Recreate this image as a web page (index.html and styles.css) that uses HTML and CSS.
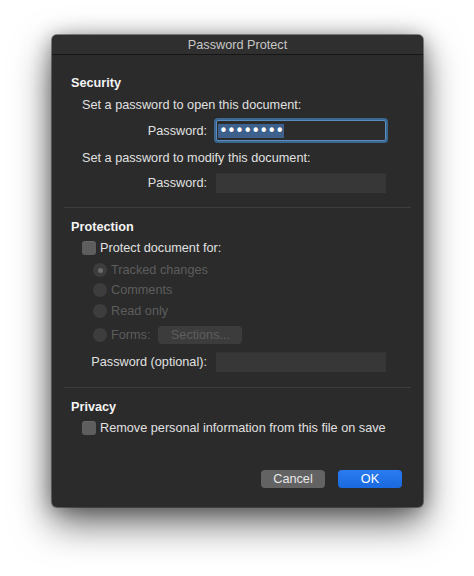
FILE: index.html
```html
<!DOCTYPE html>
<html lang="en">
<head>
<meta charset="utf-8">
<title>Password Protect</title>
<link rel="stylesheet" href="styles.css">
</head>
<body>
<div class="dialog">
  <div class="titlebar">Password Protect</div>

  <section class="section">
    <h2 class="heading h-security">Security</h2>
    <p class="line l-open">Set a password to open this document:</p>
    <div class="field-row r-pw1">
      <span class="label">Password:</span>
      <div class="field focused"><span class="sel">••••••••</span></div>
    </div>
    <p class="line l-modify">Set a password to modify this document:</p>
    <div class="field-row r-pw2">
      <span class="label">Password:</span>
      <div class="field"></div>
    </div>
  </section>

  <hr class="sep sep-1">

  <section class="section">
    <h2 class="heading h-protection">Protection</h2>
    <label class="check-row r-protect"><span class="checkbox"></span><span>Protect document for:</span></label>
    <div class="radio-row r-tracked disabled"><span class="radio on"></span><span>Tracked changes</span></div>
    <div class="radio-row r-comments disabled"><span class="radio"></span><span>Comments</span></div>
    <div class="radio-row r-readonly disabled"><span class="radio"></span><span>Read only</span></div>
    <div class="radio-row r-forms disabled"><span class="radio"></span><span class="forms-label">Forms:</span><span class="btn-sections">Sections...</span></div>
    <div class="field-row r-pwopt">
      <span class="label">Password (optional):</span>
      <div class="field"></div>
    </div>
  </section>

  <hr class="sep sep-2">

  <section class="section">
    <h2 class="heading h-privacy">Privacy</h2>
    <label class="check-row r-remove"><span class="checkbox"></span><span>Remove personal information from this file on save</span></label>
  </section>

  <div class="buttons">
    <span class="btn btn-cancel">Cancel</span>
    <span class="btn btn-ok">OK</span>
  </div>
</div>
</body>
</html>
```

FILE: styles.css
```css
* { box-sizing: border-box; }

html, body {
  margin: 0;
  padding: 0;
  background: #ffffff;
}

body {
  min-height: 576px;
  padding-top: 35px;
  padding-left: 52px;
  font-family: "Liberation Sans", Arial, sans-serif;
  font-size: 12.7px;
  color: #e0e0e0;
}

.dialog {
  width: 371px;
  background: #2b2b2b;
  border-radius: 5px;
  padding-bottom: 19px;
  box-shadow: 0 16px 38px rgba(0, 0, 0, 0.6), 0 2px 20px rgba(0, 0, 0, 0.35), 0 0 0 1px rgba(0, 0, 0, 0.4);
}

.titlebar {
  height: 20px;
  line-height: 20px;
  text-align: center;
  color: #c8c8c8;
  background: #2f2f2f;
  border-bottom: 1px solid #161616;
  border-radius: 5px 5px 0 0;
}

.section {
  padding-left: 19px;
  padding-right: 21px;
  display: flex;
  flex-direction: column;
}

.heading {
  margin: 0;
  height: 20px;
  line-height: 20px;
  font-size: 12.7px;
  font-weight: bold;
  color: #f4f4f4;
}

.h-security { margin-top: 18px; }
.h-protection { margin-top: 9px; }
.h-privacy { margin-top: 9px; }

.line {
  margin: 0;
  height: 20px;
  line-height: 20px;
  padding-left: 11px;
}

.l-open { margin-top: 2px; }
.l-modify { margin-top: 7px; }

.field-row {
  display: flex;
  align-items: center;
  height: 20px;
  gap: 9px;
}

.r-pw1 { margin-top: 5px; height: 21px; }
.r-pw2 { margin-top: 5px; }
.r-pwopt { margin-top: 7px; }

.label {
  width: 136px;
  text-align: right;
  flex: none;
}

.field {
  width: 170px;
  height: 20px;
  background: #373737;
  border-top: 1px solid #313131;
  flex: none;
}

.field.focused {
  height: 21px;
  background: #2c2c2c;
  border: 1px solid #5b8cc0;
  box-shadow: 0 0 0 2px #3a6891;
  border-radius: 2px;
  padding: 2px 1px;
  display: flex;
  align-items: center;
}

.sel {
  display: inline-block;
  height: 14px;
  line-height: 14px;
  padding: 0 1px 0 1px;
  background: #3d618c;
  color: #ffffff;
  font-family: "DejaVu Sans", sans-serif;
  font-size: 15px;
  letter-spacing: -0.8px;
}

.sep {
  margin: 0 12px;
  border: 0;
  height: 1px;
  background: #3d3d3d;
}

.sep-1 { margin-top: 14px; }
.sep-2 { margin-top: 15px; }

.check-row {
  display: flex;
  align-items: center;
  gap: 4px;
  height: 20px;
  padding-left: 11px;
}

.r-protect { margin-top: 1px; }
.r-remove { margin-top: 1px; }

.checkbox {
  width: 14px;
  height: 14px;
  border-radius: 3px;
  background: #5e5e5e;
  box-shadow: inset 0 1px 0 rgba(255, 255, 255, 0.06);
  flex: none;
}

.radio-row {
  display: flex;
  align-items: center;
  gap: 4px;
  height: 20px;
  padding-left: 22px;
}

.radio-row.disabled { color: #5d5d5d; }

.r-tracked { margin-top: 2px; }
.r-comments { margin-top: 0; }
.r-readonly { margin-top: 1px; }
.r-forms { margin-top: 4px; }

.radio {
  width: 14px;
  height: 14px;
  border-radius: 50%;
  background: #3d3d3d;
  flex: none;
  display: flex;
  align-items: center;
  justify-content: center;
}

.radio.on::after {
  content: "";
  width: 5px;
  height: 5px;
  border-radius: 50%;
  background: #6c6c6c;
}

.forms-label { margin-right: 4px; }

.btn-sections {
  width: 84px;
  height: 18px;
  line-height: 18px;
  text-align: center;
  border-radius: 4px;
  background: #3c3c3c;
  color: #5e5e5e;
}

.buttons {
  display: flex;
  justify-content: flex-end;
  gap: 13px;
  margin-top: 32px;
  padding-right: 21px;
}

.btn {
  width: 64px;
  height: 18px;
  line-height: 18px;
  text-align: center;
  border-radius: 4px;
}

.btn-cancel {
  background: #636363;
  color: #e8e8e8;
}

.btn-ok {
  background: linear-gradient(#2a7cf0, #1a69de);
  color: #ffffff;
}
```
